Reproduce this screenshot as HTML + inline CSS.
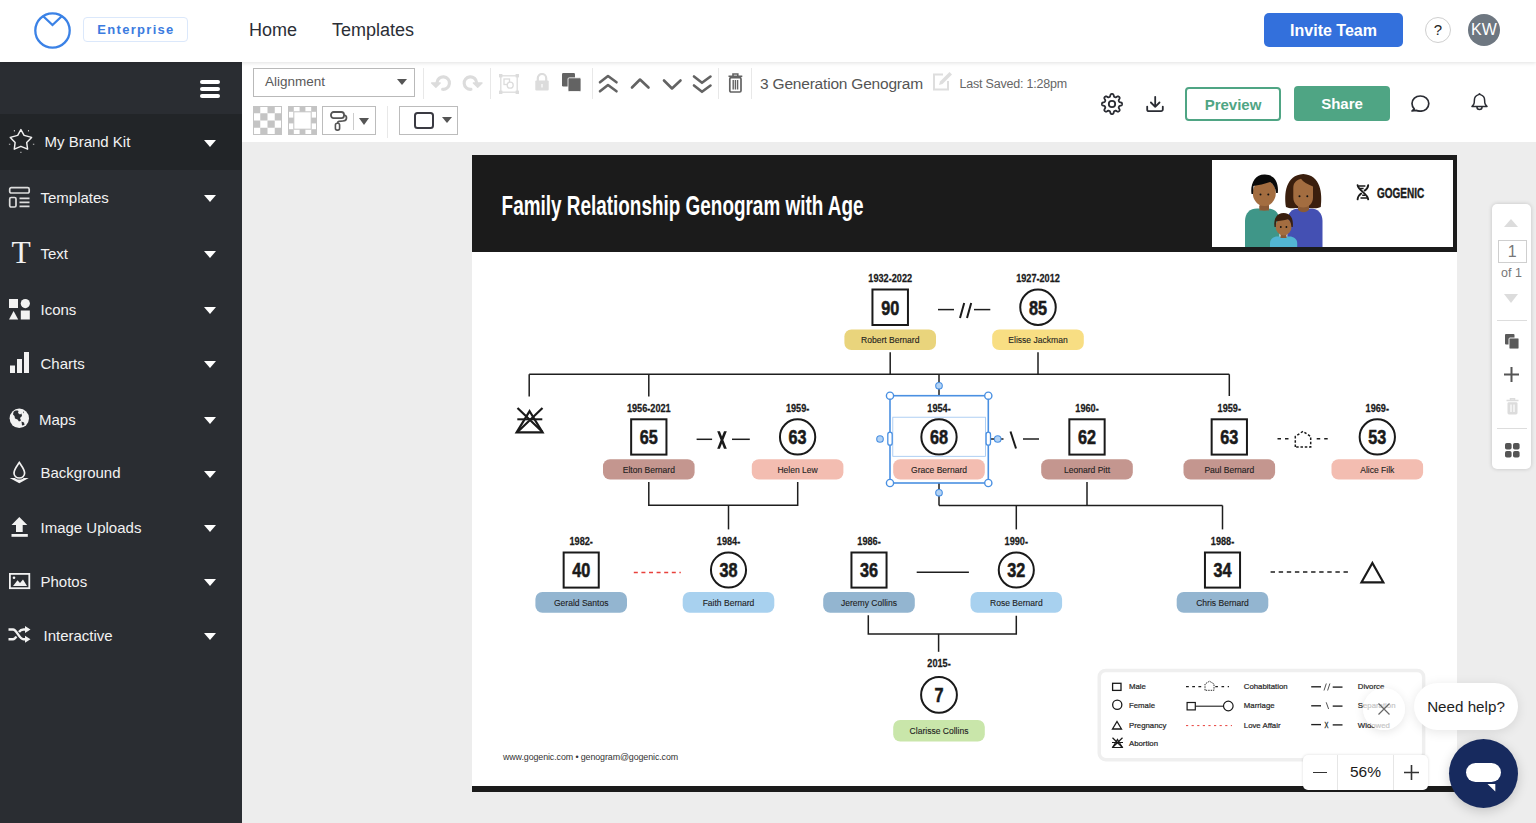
<!DOCTYPE html>
<html><head><meta charset="utf-8">
<style>
*{margin:0;padding:0;box-sizing:border-box}
html,body{width:1536px;height:823px;overflow:hidden;background:#ededed;font-family:"Liberation Sans",sans-serif}
.a{position:absolute}
#hdr{left:0;top:0;width:1536px;height:62px;background:#fff;box-shadow:0 1px 4px rgba(0,0,0,.12);z-index:5}
#side{left:0;top:62px;width:242px;height:761px;background:#2a2d32;z-index:4}
#tb{left:242px;top:62px;width:1294px;height:80px;background:#fff;z-index:3}
.nav{font-size:18px;color:#2b2e36;top:20px}
.si{left:0;width:242px;height:55px;color:#f2f2f2;font-size:15px}
.si .t{position:absolute;top:0;line-height:55px}
.si .c{position:absolute;left:204px;top:25.6px;width:0;height:0;border-left:6px solid transparent;border-right:6px solid transparent;border-top:7px solid #fff}
.si svg{position:absolute}
</style></head>
<body>
<!-- HEADER -->
<div id="hdr" class="a">
  <svg class="a" style="left:33px;top:11px" width="39" height="39" viewBox="0 0 39 39">
    <circle cx="19.5" cy="19.5" r="17.2" fill="none" stroke="#3b82e6" stroke-width="2.3"/>
    <polyline points="10.5,5.5 19.5,14 28.5,5.5" fill="none" stroke="#3b82e6" stroke-width="2.3"/>
  </svg>
  <div class="a" style="left:83px;top:17px;width:105px;height:25px;border:1px solid #dbe8fb;border-radius:4px;color:#3b7be0;font-size:13px;font-weight:bold;letter-spacing:1.3px;line-height:24px;text-align:center;padding-left:1px">Enterprise</div>
  <div class="a nav" style="left:249px">Home</div>
  <div class="a nav" style="left:332px">Templates</div>
  <div class="a" style="left:1264px;top:13px;width:139px;height:34px;background:#3370dc;border-radius:5px;color:#fff;font-weight:bold;font-size:16px;line-height:36px;text-align:center">Invite Team</div>
  <div class="a" style="left:1425px;top:17px;width:26px;height:26px;border:1px solid #cfcfcf;border-radius:50%;font-size:15px;line-height:24px;text-align:center;color:#222">?</div>
  <div class="a" style="left:1468px;top:14px;width:32px;height:32px;background:#6e7781;border-radius:50%;font-size:16px;line-height:32px;text-align:center;color:#fff">KW</div>
</div>

<!-- SIDEBAR -->
<div id="side" class="a">
  <div class="a" style="left:0;top:52px;width:242px;height:55.5px;background:#222528"></div>
<div class="a si" style="top:52.4px"><span class="t" style="left:44.5px">My Brand Kit</span><span class="c"></span></div>
<svg class="a" style="left:0;top:58px" width="40" height="40" viewBox="0 120 40 40"><path d="M20.9 129.6 L24.1 135.4 L31.6 137.4 L26.7 142.6 L27.6 149.2 L20.9 146.3 L14.3 149.2 L15.1 142.6 L10.3 137.4 L17.7 135.4 Z" fill="none" stroke="#f0f0f0" stroke-width="1.45" stroke-linejoin="round"/><path d="M14.4 130 V131.6 M28.5 130 V131.6 M8.9 144.3 H10.3 M32.9 144.3 H34.3 M20.9 151.7 V153" stroke="#bdbdbd" stroke-width="1.1"/></svg>
<div class="a si" style="top:107.8px"><span class="t" style="left:40.5px">Templates</span><span class="c"></span></div>
<svg class="a" style="left:8px;top:124.0px" width="23" height="23" viewBox="0 0 23 23"><rect x="1.7" y="1.7" width="19.5" height="5.3" rx="1.6" fill="none" stroke="#ddd" stroke-width="1.7"/><rect x="1.7" y="11.5" width="6.3" height="9.5" rx="1.4" fill="none" stroke="#ddd" stroke-width="1.7"/><path d="M11.5 12.3h10M11.5 16.3h10M11.5 20.3h10" stroke="#ddd" stroke-width="1.7"/></svg>
<div class="a si" style="top:163.6px"><span class="t" style="left:40.5px">Text</span><span class="c"></span></div>
<div class="a" style="left:11.5px;top:175px;font-family:'Liberation Serif',serif;font-size:31.5px;color:#f2f2f2;line-height:32px">T</div>
<div class="a si" style="top:219.5px"><span class="t" style="left:40.5px">Icons</span><span class="c"></span></div>
<svg class="a" style="left:9px;top:237.0px" width="22" height="21" viewBox="0 0 22 21"><rect x="0" y="0" width="9" height="9" fill="#f2f2f2"/><circle cx="16.3" cy="4.6" r="4.6" fill="#f2f2f2"/><path d="M0 20.5 L4.6 12 L9.2 20.5Z" fill="#f2f2f2"/><rect x="11.8" y="11.5" width="9" height="9" fill="#f2f2f2"/></svg>
<div class="a si" style="top:273.7px"><span class="t" style="left:40.5px">Charts</span><span class="c"></span></div>
<svg class="a" style="left:10px;top:290.0px" width="19" height="21" viewBox="0 0 19 21"><rect x="0" y="13.5" width="5" height="7.5" fill="#f2f2f2"/><rect x="7" y="7" width="5" height="14" fill="#f2f2f2"/><rect x="14" y="0" width="5" height="21" fill="#f2f2f2"/></svg>
<div class="a si" style="top:329.8px"><span class="t" style="left:39.0px">Maps</span><span class="c"></span></div>
<svg class="a" style="left:9px;top:346.0px" width="21" height="21" viewBox="0 0 21 21"><circle cx="10.3" cy="10.3" r="9.7" fill="#f2f2f2"/><path d="M4.5 4 C6 2.5 8 2.2 9.5 3 L9 5 L11 6.5 L12.5 5.5 L13 8 L11 10 L12 12.5 L10 13.5 L8.5 11.5 L6 10.5 L5.5 8 L4 6.5Z" fill="#2b2e33"/><path d="M12.5 13.5 L15 14.5 L15.5 17 L13 17.5Z" fill="#2b2e33"/><path d="M14 3 L15 4.5 L14.5 5.5Z" fill="#2b2e33"/></svg>
<div class="a si" style="top:383.3px"><span class="t" style="left:40.5px">Background</span><span class="c"></span></div>
<svg class="a" style="left:9px;top:399.0px" width="21" height="23" viewBox="0 0 21 23"><path d="M10.3 1.5 C8 5 5 8.5 5 12 C5 15 7.4 17 10.3 17 C13.2 17 15.6 15 15.6 12 C15.6 8.5 12.6 5 10.3 1.5Z" fill="none" stroke="#f2f2f2" stroke-width="1.7"/><path d="M0.7 17 L6 17 C7 18 8.5 18.6 10.3 18.6 C12.1 18.6 13.6 18 14.6 17 L19.7 17 L10.3 22.3Z" fill="#f2f2f2"/></svg>
<div class="a si" style="top:437.8px"><span class="t" style="left:40.5px">Image Uploads</span><span class="c"></span></div>
<svg class="a" style="left:11px;top:454.0px" width="18" height="22" viewBox="0 0 18 22"><path d="M8.3 1 L16.3 9 L11.7 9 L11.7 16 L5 16 L5 9 L0.5 9Z" fill="#f2f2f2"/><rect x="0.5" y="18" width="16.3" height="2.8" fill="#f2f2f2"/></svg>
<div class="a si" style="top:491.8px"><span class="t" style="left:40.5px">Photos</span><span class="c"></span></div>
<svg class="a" style="left:9px;top:511.0px" width="22" height="17" viewBox="0 0 22 17"><rect x="0.9" y="0.9" width="19.4" height="14.3" fill="none" stroke="#f2f2f2" stroke-width="1.8"/><circle cx="5" cy="4.8" r="1.3" fill="#f2f2f2"/><path d="M4 13 L8.5 7.3 L11 10 L14 6.5 L18 13Z" fill="#f2f2f2"/></svg>
<div class="a si" style="top:545.8px"><span class="t" style="left:43.5px">Interactive</span><span class="c"></span></div>
<svg class="a" style="left:8px;top:564.0px" width="23" height="17" viewBox="0 0 23 17"><path d="M0.5 3.5 H5 C9 3.5 11 13.3 15.5 13.3 H18.5" fill="none" stroke="#f2f2f2" stroke-width="2.4"/><path d="M0.5 13.3 H5 C6.5 13.3 7.5 12 8.3 10.5 M11 6 C12 4.6 13.5 3.5 15.5 3.5 H18.5" fill="none" stroke="#f2f2f2" stroke-width="2.4"/><path d="M17 0 L22.5 3.5 L17 7Z M17 9.8 L22.5 13.3 L17 16.8Z" fill="#f2f2f2"/></svg>
  <div class="a" style="left:200px;top:18px;width:20px;height:4px;background:#fff;border-radius:2px"></div>
  <div class="a" style="left:200px;top:25px;width:20px;height:4px;background:#fff;border-radius:2px"></div>
  <div class="a" style="left:200px;top:32px;width:20px;height:4px;background:#fff;border-radius:2px"></div>
</div>

<!-- TOOLBAR -->

<div id="tb" class="a">
  <!-- row1 -->
  <div class="a" style="left:11px;top:6px;width:162px;height:28.5px;border:1px solid #b9b9b9;background:#fff"></div>
  <div class="a" style="left:23px;top:12px;font-size:13.5px;color:#5a5a5a;line-height:16px">Alignment</div>
  <div class="a" style="left:154.5px;top:17px;width:0;height:0;border-left:5.5px solid transparent;border-right:5.5px solid transparent;border-top:6px solid #555"></div>
  <div class="a" style="left:181px;top:6px;width:1px;height:31px;background:#e8e8e8"></div>
  <svg class="a" style="left:186px;top:8px" width="60" height="26" viewBox="0 0 60 26"><g><path d="M14.66 19.33 A6.25 6.25 0 1 0 8.97 12.55" fill="none" stroke="#dcdcdc" stroke-width="3.1" stroke-linecap="round"/><path d="M3.6 12.9 L12.2 12.9 L7.9 17.3Z" fill="#dcdcdc" stroke="#dcdcdc" stroke-width="1.4" stroke-linejoin="round"/></g><g transform="translate(57.6,0) scale(-1,1)"><path d="M14.66 19.33 A6.25 6.25 0 1 0 8.97 12.55" fill="none" stroke="#dcdcdc" stroke-width="3.1" stroke-linecap="round"/><path d="M3.6 12.9 L12.2 12.9 L7.9 17.3Z" fill="#dcdcdc" stroke="#dcdcdc" stroke-width="1.4" stroke-linejoin="round"/></g></svg>
  <div class="a" style="left:248px;top:6px;width:1px;height:31px;background:#e8e8e8"></div>
  <svg class="a" style="left:257px;top:11.5px" width="20" height="20" viewBox="0 0 20 20"><rect x="1.8" y="1.8" width="16.4" height="16.4" fill="none" stroke="#dcdcdc" stroke-width="1.3"/><rect x="0" y="0" width="3.4" height="3.4" fill="#dcdcdc"/><rect x="16.6" y="0" width="3.4" height="3.4" fill="#dcdcdc"/><rect x="0" y="16.6" width="3.4" height="3.4" fill="#dcdcdc"/><rect x="16.6" y="16.6" width="3.4" height="3.4" fill="#dcdcdc"/><rect x="5" y="5" width="5.5" height="5.5" fill="none" stroke="#dcdcdc" stroke-width="1.3"/><circle cx="11.2" cy="11.2" r="3" fill="#fff" stroke="#dcdcdc" stroke-width="1.3"/></svg>
  <svg class="a" style="left:292.5px;top:10.5px" width="14" height="18" viewBox="0 0 14 18"><path d="M2.8 8 V5.2 A4.2 4.2 0 0 1 11.2 5.2 V8" fill="none" stroke="#dcdcdc" stroke-width="2.2"/><rect x="0.3" y="7.6" width="13.4" height="10" rx="1" fill="#dcdcdc"/><rect x="6.4" y="11" width="1.2" height="3.5" fill="#fff"/></svg>
  <svg class="a" style="left:319.5px;top:11px" width="20" height="19" viewBox="0 0 20 19"><rect x="0" y="0" width="13" height="13.5" rx="1.2" fill="#636363"/><rect x="6" y="4.8" width="13" height="13.7" rx="1.2" fill="#636363" stroke="#fff" stroke-width="0.8"/></svg>
  <div class="a" style="left:350px;top:6px;width:1px;height:31px;background:#e8e8e8"></div>
  <svg class="a" style="left:356px;top:12px" width="21" height="20" viewBox="0 0 21 20"><path d="M2 8.3 L10 2 L18.5 8.3 M2 17.3 L10 11 L18.5 17.3" fill="none" stroke="#636363" stroke-width="2.6" stroke-linecap="round" stroke-linejoin="round"/></svg>
  <svg class="a" style="left:388px;top:15px" width="21" height="13" viewBox="0 0 21 13"><path d="M2 10.5 L10 2.5 L18.5 10.5" fill="none" stroke="#636363" stroke-width="2.6" stroke-linecap="round" stroke-linejoin="round"/></svg>
  <svg class="a" style="left:419.5px;top:15.5px" width="21" height="13" viewBox="0 0 21 13"><path d="M2 2.5 L10 10.5 L18.5 2.5" fill="none" stroke="#636363" stroke-width="2.6" stroke-linecap="round" stroke-linejoin="round"/></svg>
  <svg class="a" style="left:450px;top:11.5px" width="21" height="20" viewBox="0 0 21 20"><path d="M2 2.5 L10 8.8 L18.5 2.5 M2 11.5 L10 17.8 L18.5 11.5" fill="none" stroke="#636363" stroke-width="2.6" stroke-linecap="round" stroke-linejoin="round"/></svg>
  <div class="a" style="left:475.5px;top:6px;width:1px;height:31px;background:#e8e8e8"></div>
  <svg class="a" style="left:485.5px;top:11px" width="15" height="20" viewBox="0 0 15 20"><path d="M0.5 3.3 H14.3 M5 3 V1 H9.8 V3" fill="none" stroke="#636363" stroke-width="1.6"/><rect x="1.8" y="4.6" width="11.2" height="14.4" rx="1.3" fill="none" stroke="#636363" stroke-width="1.7"/><path d="M5.2 7 V16.6 M7.4 7 V16.6 M9.6 7 V16.6" stroke="#636363" stroke-width="1.4"/></svg>
  <div class="a" style="left:508.5px;top:6px;width:1px;height:31px;background:#e8e8e8"></div>
  <div class="a" style="left:518px;top:12px;font-size:15.5px;letter-spacing:-0.2px;color:#555;line-height:20px">3 Generation Genogram</div>
  <svg class="a" style="left:689.5px;top:9px" width="21" height="21" viewBox="0 0 21 21"><path d="M11 3.5 H2 V18.5 H16 V10" fill="none" stroke="#dedede" stroke-width="2"/><path d="M7 14 L8 10.5 L17.5 1 L20 3.5 L10.5 13Z" fill="#dedede"/></svg>
  <div class="a" style="left:717.5px;top:14px;font-size:12.5px;letter-spacing:-0.2px;color:#666;line-height:16px">Last Saved: 1:28pm</div>
  <!-- row2 -->
  <svg class="a" style="left:11px;top:43.5px" width="29" height="29" viewBox="0 0 28.8 28.8"><rect x="0.00" y="0.00" width="7.20" height="7.20" fill="#c4c4c4"/><rect x="14.40" y="0.00" width="7.20" height="7.20" fill="#c4c4c4"/><rect x="7.20" y="7.20" width="7.20" height="7.20" fill="#c4c4c4"/><rect x="21.60" y="7.20" width="7.20" height="7.20" fill="#c4c4c4"/><rect x="0.00" y="14.40" width="7.20" height="7.20" fill="#c4c4c4"/><rect x="14.40" y="14.40" width="7.20" height="7.20" fill="#c4c4c4"/><rect x="7.20" y="21.60" width="7.20" height="7.20" fill="#c4c4c4"/><rect x="21.60" y="21.60" width="7.20" height="7.20" fill="#c4c4c4"/><rect x=".5" y=".5" width="27.8" height="27.8" fill="none" stroke="#c4c4c4" stroke-width="1"/></svg>
  <svg class="a" style="left:46px;top:43.5px" width="29" height="29" viewBox="0 0 28.8 28.8"><rect x="0.00" y="0.00" width="5.76" height="5.76" fill="#c4c4c4"/><rect x="11.52" y="0.00" width="5.76" height="5.76" fill="#c4c4c4"/><rect x="23.04" y="0.00" width="5.76" height="5.76" fill="#c4c4c4"/><rect x="0.00" y="11.52" width="5.76" height="5.76" fill="#c4c4c4"/><rect x="23.04" y="11.52" width="5.76" height="5.76" fill="#c4c4c4"/><rect x="0.00" y="23.04" width="5.76" height="5.76" fill="#c4c4c4"/><rect x="11.52" y="23.04" width="5.76" height="5.76" fill="#c4c4c4"/><rect x="23.04" y="23.04" width="5.76" height="5.76" fill="#c4c4c4"/><rect x=".5" y=".5" width="27.8" height="27.8" fill="none" stroke="#c4c4c4" stroke-width="1"/><rect x="5.76" y="5.76" width="17.28" height="17.28" fill="none" stroke="#c4c4c4" stroke-width="1"/></svg>
  <div class="a" style="left:80px;top:43.5px;width:54px;height:29px;border:1px solid #bcbcbc;background:#fff"></div>
  <svg class="a" style="left:88px;top:49px" width="19" height="20" viewBox="0 0 19 20"><rect x="1" y="1" width="13" height="6.2" rx="2.6" fill="none" stroke="#555" stroke-width="1.8"/><path d="M14 4 C17.5 4.5 17.5 9.8 13 10 L9 10.3 C7.5 10.4 7.6 11.2 7.6 12.5" fill="none" stroke="#555" stroke-width="1.7"/><rect x="5.4" y="12.3" width="4.2" height="6.8" rx="1.8" fill="none" stroke="#555" stroke-width="1.6"/></svg>
  <div class="a" style="left:110.5px;top:50.5px;width:1px;height:17px;background:#ccc"></div>
  <div class="a" style="left:117px;top:56px;width:0;height:0;border-left:5px solid transparent;border-right:5px solid transparent;border-top:7px solid #555"></div>
  <div class="a" style="left:145px;top:43.5px;width:1px;height:32px;background:#e8e8e8"></div>
  <div class="a" style="left:157px;top:43.5px;width:59px;height:29px;border:1px solid #bcbcbc;background:#fff"></div>
  <div class="a" style="left:171.5px;top:50px;width:20.5px;height:16.5px;border:2px solid #3a3a42;border-radius:3.5px"></div>
  <div class="a" style="left:200px;top:55px;width:0;height:0;border-left:5px solid transparent;border-right:5px solid transparent;border-top:6px solid #555"></div>
  <!-- right -->
  <svg class="a" style="left:859px;top:31px" width="22" height="22" viewBox="0 0 22 22"><path d="M11.00 0.95 L11.39 0.97 L11.78 1.05 L12.16 1.24 L12.48 1.67 L12.71 2.42 L12.88 3.17 L13.08 3.62 L13.32 3.85 L13.58 4.00 L13.85 4.12 L14.12 4.22 L14.41 4.30 L14.75 4.31 L15.21 4.13 L15.86 3.72 L16.55 3.36 L17.08 3.28 L17.48 3.41 L17.81 3.63 L18.11 3.89 L18.37 4.19 L18.59 4.52 L18.72 4.92 L18.64 5.45 L18.28 6.14 L17.87 6.79 L17.69 7.25 L17.70 7.59 L17.78 7.88 L17.88 8.15 L18.00 8.42 L18.15 8.68 L18.38 8.92 L18.83 9.12 L19.58 9.29 L20.33 9.52 L20.76 9.84 L20.95 10.22 L21.03 10.61 L21.05 11.00 L21.03 11.39 L20.95 11.78 L20.76 12.16 L20.33 12.48 L19.58 12.71 L18.83 12.88 L18.38 13.08 L18.15 13.32 L18.00 13.58 L17.88 13.85 L17.78 14.12 L17.70 14.41 L17.69 14.75 L17.87 15.21 L18.28 15.86 L18.64 16.55 L18.72 17.08 L18.59 17.48 L18.37 17.81 L18.11 18.11 L17.81 18.37 L17.48 18.59 L17.08 18.72 L16.55 18.64 L15.86 18.28 L15.21 17.87 L14.75 17.69 L14.41 17.70 L14.12 17.78 L13.85 17.88 L13.58 18.00 L13.32 18.15 L13.08 18.38 L12.88 18.83 L12.71 19.58 L12.48 20.33 L12.16 20.76 L11.78 20.95 L11.39 21.03 L11.00 21.05 L10.61 21.03 L10.22 20.95 L9.84 20.76 L9.52 20.33 L9.29 19.58 L9.12 18.83 L8.92 18.38 L8.68 18.15 L8.42 18.00 L8.15 17.88 L7.88 17.78 L7.59 17.70 L7.25 17.69 L6.79 17.87 L6.14 18.28 L5.45 18.64 L4.92 18.72 L4.52 18.59 L4.19 18.37 L3.89 18.11 L3.63 17.81 L3.41 17.48 L3.28 17.08 L3.36 16.55 L3.72 15.86 L4.13 15.21 L4.31 14.75 L4.30 14.41 L4.22 14.12 L4.12 13.85 L4.00 13.58 L3.85 13.32 L3.62 13.08 L3.17 12.88 L2.42 12.71 L1.67 12.48 L1.24 12.16 L1.05 11.78 L0.97 11.39 L0.95 11.00 L0.97 10.61 L1.05 10.22 L1.24 9.84 L1.67 9.52 L2.42 9.29 L3.17 9.12 L3.62 8.92 L3.85 8.68 L4.00 8.42 L4.12 8.15 L4.22 7.88 L4.30 7.59 L4.31 7.25 L4.13 6.79 L3.72 6.14 L3.36 5.45 L3.28 4.92 L3.41 4.52 L3.63 4.19 L3.89 3.89 L4.19 3.63 L4.52 3.41 L4.92 3.28 L5.45 3.36 L6.14 3.72 L6.79 4.13 L7.25 4.31 L7.59 4.30 L7.88 4.22 L8.15 4.12 L8.42 4.00 L8.68 3.85 L8.92 3.62 L9.12 3.17 L9.29 2.42 L9.52 1.67 L9.84 1.24 L10.22 1.05 L10.61 0.97Z" fill="none" stroke="#2a2c33" stroke-width="1.8" stroke-linejoin="round"/><circle cx="11" cy="11" r="3.2" fill="none" stroke="#2a2c33" stroke-width="1.8"/></svg>
  <svg class="a" style="left:904px;top:33px" width="18" height="18" viewBox="0 0 18 18"><path d="M9.2 1.8 V11.8 M4.9 7.5 L9.2 11.8 L13.5 7.5" fill="none" stroke="#2a2c33" stroke-width="1.8" stroke-linecap="round" stroke-linejoin="round"/><path d="M1.2 11.6 V14.4 A1.8 1.8 0 0 0 3 16.2 H15 A1.8 1.8 0 0 0 16.8 14.4 V11.6" fill="none" stroke="#2a2c33" stroke-width="1.8" stroke-linecap="round"/></svg>
  <div class="a" style="left:943px;top:24.5px;width:96px;height:34px;border:2px solid #4fa584;border-radius:4px;color:#4fa584;font-weight:bold;font-size:15px;line-height:31px;text-align:center">Preview</div>
  <div class="a" style="left:1052px;top:24px;width:96px;height:34.5px;background:#4fa584;border-radius:4px;color:#fff;font-weight:bold;font-size:15px;line-height:35px;text-align:center">Share</div>
  <svg class="a" style="left:1169px;top:33px" width="19" height="17" viewBox="0 0 19 17"><path d="M3.2 13.8 L1 16 L5 15.4 C6.2 15.9 7.6 16.2 9.3 16.2 C14 16.2 17.8 12.9 17.8 8.6 C17.8 4.3 14 1 9.3 1 C4.6 1 1 4.3 1 8.6 C1 10.6 1.8 12.4 3.2 13.8Z" fill="none" stroke="#2a2c33" stroke-width="1.7" stroke-linejoin="round"/></svg>
  <svg class="a" style="left:1229px;top:31px" width="17" height="19" viewBox="0 0 17 19"><path d="M1 13.5 H16 L14.4 11.5 C13.6 10.3 13.6 9 13.6 7 C13.6 4.3 11.5 2.3 9.4 1.6 L8.5 0.8 L7.6 1.6 C5.5 2.3 3.4 4.3 3.4 7 C3.4 9 3.4 10.3 2.6 11.5Z" fill="none" stroke="#2a2c33" stroke-width="1.5" stroke-linejoin="round"/><path d="M5.9 13.8 A2.6 2.8 0 0 0 11.1 13.8" fill="none" stroke="#2a2c33" stroke-width="1.5"/></svg>
</div>

<!-- CANVAS -->
<div id="cv" class="a" style="left:472px;top:155px;width:985px;height:637px;background:#fff;z-index:1">
  <div class="a" style="left:0;top:0;width:985px;height:97px;background:#1b1b1b"></div>
  <div class="a" style="left:0;top:631px;width:985px;height:6px;background:#1b1b1b"></div>
  <svg class="a" style="left:0;top:0" width="985" height="97" viewBox="0 0 985 97"><text x="29.6" y="60.3" textLength="362" lengthAdjust="spacingAndGlyphs" font-family="Liberation Sans" font-weight="bold" font-size="28.4" fill="#fff">Family Relationship Genogram with Age</text></svg>
  <div class="a" style="left:740px;top:5px;width:241px;height:87px;background:#fff"></div>
  <svg class="a" style="left:740px;top:5px" width="241" height="87" viewBox="1212 160 241 87">
    <!-- man -->
    <path d="M1245 247 V221 C1245 213 1250 208.5 1257 208.5 H1268 C1275 208.5 1279.5 213 1279.5 221 V247 Z" fill="#3f9688"/>
    <rect x="1259.5" y="202" width="9.5" height="8.5" fill="#93603a"/>
    <path d="M1259.5 208.5 C1261 211 1267.5 211 1269 208.5 V206 H1259.5Z" fill="#8a5a36"/>
    <ellipse cx="1264.3" cy="193" rx="11.5" ry="13" fill="#a36d40"/>
    <path d="M1251.5 194 C1250 184 1255 174 1265 174.5 C1274 174.5 1279 182 1277.8 193 L1276.2 193 C1275.5 188 1273.5 184 1270 182 C1265 184 1258 185 1253.5 186 L1253 194Z" fill="#0a0a0a"/>
    <circle cx="1260.5" cy="194.5" r="1" fill="#111"/><circle cx="1268.3" cy="194.5" r="1" fill="#111"/>
    <!-- woman -->
    <path d="M1287.3 247 V221 C1287.3 213 1292 208.5 1299 208.5 H1310.5 C1317.5 208.5 1322.5 213 1322.5 221 V247 Z" fill="#4450b3"/>
    <path d="M1286 207 C1284 194 1285.5 175 1303.3 174 C1321 175 1322.5 194 1320.8 207 C1318 208.5 1314 208.5 1310 208 L1296 208 C1292 208.5 1289 208.5 1286 207Z" fill="#3a1f0e"/>
    <path d="M1298 204 V209.5 C1300 213 1307 213 1309 209.5 V204Z" fill="#8a5a36"/>
    <path d="M1293.3 188 C1293.3 182 1297.5 179.8 1301 178.8 C1303 182 1307.5 184.5 1313 186.5 V197.5 C1313 203.5 1308.8 207.5 1303.2 207.5 C1297.6 207.5 1293.3 203.5 1293.3 197.5Z" fill="#a36d40"/>
    <circle cx="1299.5" cy="196.3" r="1" fill="#111"/><circle cx="1307.3" cy="196.3" r="1" fill="#111"/>
    <!-- child -->
    <path d="M1270 247.5 V243 C1270 239 1273.5 236.5 1277.5 236.5 H1289.5 C1293.5 236.5 1297.2 239 1297.2 243 V247.5Z" fill="#52b5d3"/>
    <rect x="1280.5" y="233" width="6" height="5" fill="#8a5a36"/>
    <ellipse cx="1283.6" cy="226.5" rx="8" ry="9" fill="#a36d40"/>
    <path d="M1274.5 227 C1273.5 218 1277 213 1283.6 213 C1290.3 213 1293.7 218 1292.8 227 L1291.5 227 C1291 222.5 1290 220.5 1288 219.3 C1284 220.5 1279.5 221 1276 221.5 L1275.8 227Z" fill="#3a1f0e"/>
    <circle cx="1280.8" cy="227" r=".9" fill="#111"/><circle cx="1286.4" cy="227" r=".9" fill="#111"/>
    <!-- logo -->
    <g fill="none" stroke="#1a1a1a" stroke-width="1.9" stroke-linecap="round"><path d="M1357.6 185.2 C1358.5 191 1367.5 193 1368.2 199.4"/><path d="M1368.2 185.2 C1368 187.5 1366.5 189.5 1364.6 190.6 M1361.2 193.5 C1359 195 1357.8 197 1357.6 199.4"/></g><g stroke="#1a1a1a" stroke-width="1.5"><path d="M1358.5 185.9 H1365.4 M1360 188.4 H1363.6 M1362.2 195.3 H1365.4 M1360.5 198.1 H1367"/></g>
    <text x="1377" y="198.2" textLength="47.3" lengthAdjust="spacingAndGlyphs" font-family="Liberation Sans" font-weight="bold" font-size="15.3" fill="#1a1a1a" stroke="#1a1a1a" stroke-width="0.4">GOGENIC</text>
  </svg>
  <div class="a" style="left:31px;top:596px;font-size:8.9px;color:#333;line-height:12px;letter-spacing:-0.1px">www.gogenic.com &bull; genogram@gogenic.com</div>
</div>
<!--GENO--><svg class="a" style="left:0;top:0;z-index:2" width="1536" height="823" viewBox="0 0 1536 823"><line x1="529.2" y1="374.3" x2="1229.3" y2="374.3" stroke="#1e1e1e" stroke-width="1.5"/><line x1="529.2" y1="374.3" x2="529.2" y2="396.6" stroke="#1e1e1e" stroke-width="1.5"/><line x1="648.8" y1="374.3" x2="648.8" y2="396.6" stroke="#1e1e1e" stroke-width="1.5"/><line x1="890.2" y1="352.3" x2="890.2" y2="374.3" stroke="#1e1e1e" stroke-width="1.5"/><line x1="939" y1="374.3" x2="939" y2="395.7" stroke="#1e1e1e" stroke-width="1.5"/><line x1="1038" y1="352.3" x2="1038" y2="374.3" stroke="#1e1e1e" stroke-width="1.5"/><line x1="1229.3" y1="374.3" x2="1229.3" y2="396" stroke="#1e1e1e" stroke-width="1.5"/><polyline points="648.8,482 648.8,505.3 797.7,505.3 797.7,482" fill="none" stroke="#1e1e1e" stroke-width="1.5"/><line x1="728.5" y1="505.3" x2="728.5" y2="529.4" stroke="#1e1e1e" stroke-width="1.5"/><line x1="939" y1="483" x2="939" y2="505.5" stroke="#1e1e1e" stroke-width="1.5"/><line x1="1087" y1="482" x2="1087" y2="505.5" stroke="#1e1e1e" stroke-width="1.5"/><line x1="939" y1="505.5" x2="1222.5" y2="505.5" stroke="#1e1e1e" stroke-width="1.5"/><line x1="1016.3" y1="505.5" x2="1016.3" y2="529.4" stroke="#1e1e1e" stroke-width="1.5"/><line x1="1222.5" y1="505.5" x2="1222.5" y2="529.4" stroke="#1e1e1e" stroke-width="1.5"/><polyline points="868.3,615.2 868.3,633.9 1016.3,633.9 1016.3,615.7" fill="none" stroke="#1e1e1e" stroke-width="1.5"/><line x1="938.6" y1="633.9" x2="938.6" y2="651.8" stroke="#1e1e1e" stroke-width="1.5"/><text transform="translate(890.2,281.6) scale(0.84,1)" text-anchor="middle" font-family="Liberation Sans" font-weight="bold" font-size="10.9" fill="#1a1a1a" stroke="#1a1a1a" stroke-width="0.25">1932-2022</text><rect x="872.45" y="289.50" width="35.50" height="35.50" fill="#fff" stroke="#1a1a1a" stroke-width="2.0"/><text transform="translate(890.2,314.65) scale(0.82,1)" text-anchor="middle" font-family="Liberation Sans" font-weight="bold" font-size="19.8" fill="#1a1a1a" stroke="#1a1a1a" stroke-width="0.55">90</text><rect x="844.40" y="329.4" width="91.6" height="20.60" rx="7" fill="#e9d47c"/><text transform="translate(890.2,343.30) scale(0.89,1)" text-anchor="middle" font-family="Liberation Sans" font-size="9.6" fill="#1e1e1e" stroke="#1e1e1e" stroke-width="0.12">Robert Bernard</text><text transform="translate(1038,281.6) scale(0.84,1)" text-anchor="middle" font-family="Liberation Sans" font-weight="bold" font-size="10.9" fill="#1a1a1a" stroke="#1a1a1a" stroke-width="0.25">1927-2012</text><circle cx="1038" cy="307.25" r="17.75" fill="#fff" stroke="#1a1a1a" stroke-width="2.0"/><text transform="translate(1038,314.65) scale(0.82,1)" text-anchor="middle" font-family="Liberation Sans" font-weight="bold" font-size="19.8" fill="#1a1a1a" stroke="#1a1a1a" stroke-width="0.55">85</text><rect x="992.20" y="329.4" width="91.6" height="20.60" rx="7" fill="#f8de83"/><text transform="translate(1038,343.30) scale(0.89,1)" text-anchor="middle" font-family="Liberation Sans" font-size="9.6" fill="#1e1e1e" stroke="#1e1e1e" stroke-width="0.12">Elisse Jackman</text><text transform="translate(648.8,411.6) scale(0.84,1)" text-anchor="middle" font-family="Liberation Sans" font-weight="bold" font-size="10.9" fill="#1a1a1a" stroke="#1a1a1a" stroke-width="0.25">1956-2021</text><rect x="631.15" y="419.30" width="35.30" height="35.30" fill="#fff" stroke="#1a1a1a" stroke-width="2.0"/><text transform="translate(648.8,444.35) scale(0.82,1)" text-anchor="middle" font-family="Liberation Sans" font-weight="bold" font-size="19.8" fill="#1a1a1a" stroke="#1a1a1a" stroke-width="0.55">65</text><rect x="603.00" y="459.2" width="91.6" height="20.40" rx="7" fill="#c4968f"/><text transform="translate(648.8,473.00) scale(0.89,1)" text-anchor="middle" font-family="Liberation Sans" font-size="9.6" fill="#1e1e1e" stroke="#1e1e1e" stroke-width="0.12">Elton Bernard</text><text transform="translate(797.6,411.6) scale(0.84,1)" text-anchor="middle" font-family="Liberation Sans" font-weight="bold" font-size="10.9" fill="#1a1a1a" stroke="#1a1a1a" stroke-width="0.25">1959-</text><circle cx="797.6" cy="436.95" r="17.65" fill="#fff" stroke="#1a1a1a" stroke-width="2.0"/><text transform="translate(797.6,444.35) scale(0.82,1)" text-anchor="middle" font-family="Liberation Sans" font-weight="bold" font-size="19.8" fill="#1a1a1a" stroke="#1a1a1a" stroke-width="0.55">63</text><rect x="751.80" y="459.2" width="91.6" height="20.40" rx="7" fill="#f3bdb1"/><text transform="translate(797.6,473.00) scale(0.89,1)" text-anchor="middle" font-family="Liberation Sans" font-size="9.6" fill="#1e1e1e" stroke="#1e1e1e" stroke-width="0.12">Helen Lew</text><text transform="translate(939,411.6) scale(0.84,1)" text-anchor="middle" font-family="Liberation Sans" font-weight="bold" font-size="10.9" fill="#1a1a1a" stroke="#1a1a1a" stroke-width="0.25">1954-</text><circle cx="939" cy="436.95" r="17.65" fill="#fff" stroke="#1a1a1a" stroke-width="2.0"/><text transform="translate(939,444.35) scale(0.82,1)" text-anchor="middle" font-family="Liberation Sans" font-weight="bold" font-size="19.8" fill="#1a1a1a" stroke="#1a1a1a" stroke-width="0.55">68</text><rect x="893.20" y="459.2" width="91.6" height="20.40" rx="7" fill="#f3bdb1"/><text transform="translate(939,473.00) scale(0.89,1)" text-anchor="middle" font-family="Liberation Sans" font-size="9.6" fill="#1e1e1e" stroke="#1e1e1e" stroke-width="0.12">Grace Bernard</text><text transform="translate(1087,411.6) scale(0.84,1)" text-anchor="middle" font-family="Liberation Sans" font-weight="bold" font-size="10.9" fill="#1a1a1a" stroke="#1a1a1a" stroke-width="0.25">1960-</text><rect x="1069.35" y="419.30" width="35.30" height="35.30" fill="#fff" stroke="#1a1a1a" stroke-width="2.0"/><text transform="translate(1087,444.35) scale(0.82,1)" text-anchor="middle" font-family="Liberation Sans" font-weight="bold" font-size="19.8" fill="#1a1a1a" stroke="#1a1a1a" stroke-width="0.55">62</text><rect x="1041.20" y="459.2" width="91.6" height="20.40" rx="7" fill="#c4968f"/><text transform="translate(1087,473.00) scale(0.89,1)" text-anchor="middle" font-family="Liberation Sans" font-size="9.6" fill="#1e1e1e" stroke="#1e1e1e" stroke-width="0.12">Leonard Pitt</text><text transform="translate(1229.3,411.6) scale(0.84,1)" text-anchor="middle" font-family="Liberation Sans" font-weight="bold" font-size="10.9" fill="#1a1a1a" stroke="#1a1a1a" stroke-width="0.25">1959-</text><rect x="1211.65" y="419.30" width="35.30" height="35.30" fill="#fff" stroke="#1a1a1a" stroke-width="2.0"/><text transform="translate(1229.3,444.35) scale(0.82,1)" text-anchor="middle" font-family="Liberation Sans" font-weight="bold" font-size="19.8" fill="#1a1a1a" stroke="#1a1a1a" stroke-width="0.55">63</text><rect x="1183.50" y="459.2" width="91.6" height="20.40" rx="7" fill="#c4968f"/><text transform="translate(1229.3,473.00) scale(0.89,1)" text-anchor="middle" font-family="Liberation Sans" font-size="9.6" fill="#1e1e1e" stroke="#1e1e1e" stroke-width="0.12">Paul Bernard</text><text transform="translate(1377.3,411.6) scale(0.84,1)" text-anchor="middle" font-family="Liberation Sans" font-weight="bold" font-size="10.9" fill="#1a1a1a" stroke="#1a1a1a" stroke-width="0.25">1969-</text><circle cx="1377.3" cy="436.95" r="17.65" fill="#fff" stroke="#1a1a1a" stroke-width="2.0"/><text transform="translate(1377.3,444.35) scale(0.82,1)" text-anchor="middle" font-family="Liberation Sans" font-weight="bold" font-size="19.8" fill="#1a1a1a" stroke="#1a1a1a" stroke-width="0.55">53</text><rect x="1331.50" y="459.2" width="91.6" height="20.40" rx="7" fill="#f3bdb1"/><text transform="translate(1377.3,473.00) scale(0.89,1)" text-anchor="middle" font-family="Liberation Sans" font-size="9.6" fill="#1e1e1e" stroke="#1e1e1e" stroke-width="0.12">Alice Filk</text><text transform="translate(581.2,544.6) scale(0.84,1)" text-anchor="middle" font-family="Liberation Sans" font-weight="bold" font-size="10.9" fill="#1a1a1a" stroke="#1a1a1a" stroke-width="0.25">1982-</text><rect x="563.65" y="552.50" width="35.10" height="35.10" fill="#fff" stroke="#1a1a1a" stroke-width="2.0"/><text transform="translate(581.2,577.45) scale(0.82,1)" text-anchor="middle" font-family="Liberation Sans" font-weight="bold" font-size="19.8" fill="#1a1a1a" stroke="#1a1a1a" stroke-width="0.55">40</text><rect x="535.40" y="592.0" width="91.6" height="20.80" rx="7" fill="#93b5d0"/><text transform="translate(581.2,606.00) scale(0.89,1)" text-anchor="middle" font-family="Liberation Sans" font-size="9.6" fill="#1e1e1e" stroke="#1e1e1e" stroke-width="0.12">Gerald Santos</text><text transform="translate(728.5,544.6) scale(0.84,1)" text-anchor="middle" font-family="Liberation Sans" font-weight="bold" font-size="10.9" fill="#1a1a1a" stroke="#1a1a1a" stroke-width="0.25">1984-</text><circle cx="728.5" cy="570.05" r="17.55" fill="#fff" stroke="#1a1a1a" stroke-width="2.0"/><text transform="translate(728.5,577.45) scale(0.82,1)" text-anchor="middle" font-family="Liberation Sans" font-weight="bold" font-size="19.8" fill="#1a1a1a" stroke="#1a1a1a" stroke-width="0.55">38</text><rect x="682.70" y="592.0" width="91.6" height="20.80" rx="7" fill="#a8d1ef"/><text transform="translate(728.5,606.00) scale(0.89,1)" text-anchor="middle" font-family="Liberation Sans" font-size="9.6" fill="#1e1e1e" stroke="#1e1e1e" stroke-width="0.12">Faith Bernard</text><text transform="translate(869,544.6) scale(0.84,1)" text-anchor="middle" font-family="Liberation Sans" font-weight="bold" font-size="10.9" fill="#1a1a1a" stroke="#1a1a1a" stroke-width="0.25">1986-</text><rect x="851.45" y="552.50" width="35.10" height="35.10" fill="#fff" stroke="#1a1a1a" stroke-width="2.0"/><text transform="translate(869,577.45) scale(0.82,1)" text-anchor="middle" font-family="Liberation Sans" font-weight="bold" font-size="19.8" fill="#1a1a1a" stroke="#1a1a1a" stroke-width="0.55">36</text><rect x="823.20" y="592.0" width="91.6" height="20.80" rx="7" fill="#93b5d0"/><text transform="translate(869,606.00) scale(0.89,1)" text-anchor="middle" font-family="Liberation Sans" font-size="9.6" fill="#1e1e1e" stroke="#1e1e1e" stroke-width="0.12">Jeremy Collins</text><text transform="translate(1016.3,544.6) scale(0.84,1)" text-anchor="middle" font-family="Liberation Sans" font-weight="bold" font-size="10.9" fill="#1a1a1a" stroke="#1a1a1a" stroke-width="0.25">1990-</text><circle cx="1016.3" cy="570.05" r="17.55" fill="#fff" stroke="#1a1a1a" stroke-width="2.0"/><text transform="translate(1016.3,577.45) scale(0.82,1)" text-anchor="middle" font-family="Liberation Sans" font-weight="bold" font-size="19.8" fill="#1a1a1a" stroke="#1a1a1a" stroke-width="0.55">32</text><rect x="970.50" y="592.0" width="91.6" height="20.80" rx="7" fill="#a8d1ef"/><text transform="translate(1016.3,606.00) scale(0.89,1)" text-anchor="middle" font-family="Liberation Sans" font-size="9.6" fill="#1e1e1e" stroke="#1e1e1e" stroke-width="0.12">Rose Bernard</text><text transform="translate(1222.5,544.6) scale(0.84,1)" text-anchor="middle" font-family="Liberation Sans" font-weight="bold" font-size="10.9" fill="#1a1a1a" stroke="#1a1a1a" stroke-width="0.25">1988-</text><rect x="1204.95" y="552.50" width="35.10" height="35.10" fill="#fff" stroke="#1a1a1a" stroke-width="2.0"/><text transform="translate(1222.5,577.45) scale(0.82,1)" text-anchor="middle" font-family="Liberation Sans" font-weight="bold" font-size="19.8" fill="#1a1a1a" stroke="#1a1a1a" stroke-width="0.55">34</text><rect x="1176.70" y="592.0" width="91.6" height="20.80" rx="7" fill="#93b5d0"/><text transform="translate(1222.5,606.00) scale(0.89,1)" text-anchor="middle" font-family="Liberation Sans" font-size="9.6" fill="#1e1e1e" stroke="#1e1e1e" stroke-width="0.12">Chris Bernard</text><text transform="translate(939,666.7) scale(0.84,1)" text-anchor="middle" font-family="Liberation Sans" font-weight="bold" font-size="10.9" fill="#1a1a1a" stroke="#1a1a1a" stroke-width="0.25">2015-</text><circle cx="939" cy="694.90" r="17.90" fill="#fff" stroke="#1a1a1a" stroke-width="2.0"/><text transform="translate(939,702.30) scale(0.82,1)" text-anchor="middle" font-family="Liberation Sans" font-weight="bold" font-size="19.8" fill="#1a1a1a" stroke="#1a1a1a" stroke-width="0.55">7</text><rect x="893.20" y="720.0" width="91.6" height="21.60" rx="7" fill="#c9e6aa"/><text transform="translate(939,734.40) scale(0.89,1)" text-anchor="middle" font-family="Liberation Sans" font-size="9.6" fill="#1e1e1e" stroke="#1e1e1e" stroke-width="0.12">Clarisse Collins</text><line x1="938" y1="309.6" x2="954" y2="309.6" stroke="#1e1e1e" stroke-width="1.5"/><line x1="974" y1="309.6" x2="990.3" y2="309.6" stroke="#1e1e1e" stroke-width="1.5"/><path d="M960 318 L964.2 303 M967 318 L971.2 303" stroke="#1a1a1a" stroke-width="2"/><line x1="696.6" y1="439.3" x2="712.1" y2="439.3" stroke="#1e1e1e" stroke-width="1.5"/><line x1="732" y1="439.3" x2="749.8" y2="439.3" stroke="#1e1e1e" stroke-width="1.5"/><path d="M717.2 431.3 H719.9 L726.8 448.8 H724Z M724 431.3 H726.8 L719.9 448.8 H717.2Z" fill="#1a1a1a"/><line x1="990.8" y1="439" x2="1003.5" y2="439" stroke="#1e1e1e" stroke-width="1.5"/><path d="M1010.5 431.5 L1016 448.5" stroke="#1a1a1a" stroke-width="2"/><line x1="1023" y1="439" x2="1039" y2="439" stroke="#1e1e1e" stroke-width="1.5"/><line x1="1277.5" y1="438.8" x2="1289" y2="438.8" stroke="#1e1e1e" stroke-width="1.5" stroke-dasharray="3.5 4"/><line x1="1316.7" y1="438.8" x2="1329" y2="438.8" stroke="#1e1e1e" stroke-width="1.5" stroke-dasharray="3.5 4"/><path d="M1295.3 447 V436.5 L1303 431.3 L1310.7 436.5 V447 Z" fill="none" stroke="#1a1a1a" stroke-width="1.5" stroke-dasharray="2.5 1.8"/><line x1="633.8" y1="572.5" x2="680.8" y2="572.5" stroke="#e8413c" stroke-width="1.4" stroke-dasharray="4 3.6"/><line x1="916.7" y1="572.3" x2="968.9" y2="572.3" stroke="#1e1e1e" stroke-width="1.5"/><line x1="1270.6" y1="571.9" x2="1351.4" y2="571.9" stroke="#1e1e1e" stroke-width="1.5" stroke-dasharray="4.4 3.7"/><path d="M1372.4 563 L1383.3 582.3 H1361.5 Z" fill="none" stroke="#1a1a1a" stroke-width="2.2" stroke-linejoin="miter"/><g stroke="#1a1a1a" stroke-width="2.2" fill="none"><path d="M529.6 411.2 L542.6 432.4 H516.6 Z"/><path d="M517.5 408 L542.5 432 M542.5 408 L517.5 432"/><path d="M517.3 419.3 H542.3" stroke-width="2"/></g><rect x="892.8" y="417.2" width="92.6" height="39.1" fill="none" stroke="#9cc3f0" stroke-width="0.8"/><rect x="890" y="395.7" width="98.3" height="87.3" fill="none" stroke="#4a90e2" stroke-width="1.6"/><circle cx="890" cy="395.7" r="3.6" fill="#fff" stroke="#4a90e2" stroke-width="1.4"/><circle cx="988.3" cy="395.7" r="3.6" fill="#fff" stroke="#4a90e2" stroke-width="1.4"/><circle cx="890" cy="483" r="3.6" fill="#fff" stroke="#4a90e2" stroke-width="1.4"/><circle cx="988.3" cy="483" r="3.6" fill="#fff" stroke="#4a90e2" stroke-width="1.4"/><rect x="887.8" y="432.2" width="4.4" height="13" rx="2.2" fill="#fff" stroke="#4a90e2" stroke-width="1.3"/><rect x="986.0999999999999" y="432.2" width="4.4" height="13" rx="2.2" fill="#fff" stroke="#4a90e2" stroke-width="1.3"/><circle cx="939" cy="385.8" r="3.3" fill="#b3d3f5" stroke="#4a90e2" stroke-width="1.1"/><circle cx="939" cy="492.8" r="3.3" fill="#b3d3f5" stroke="#4a90e2" stroke-width="1.1"/><circle cx="880" cy="439" r="3.3" fill="#b3d3f5" stroke="#4a90e2" stroke-width="1.1"/><circle cx="997.7" cy="439" r="3.3" fill="#b3d3f5" stroke="#4a90e2" stroke-width="1.1"/><rect x="1099.25" y="670.45" width="324.4" height="89.3" rx="6.5" fill="#fff" stroke="#efefef" stroke-width="3.5"/><rect x="1112.6" y="683.3" width="8.4" height="7.1" fill="none" stroke="#1a1a1a" stroke-width="1.3"/><circle cx="1117.25" cy="704.8" r="4.6" fill="none" stroke="#1a1a1a" stroke-width="1.3"/><path d="M1117 721.5 L1121.5 729 H1112.5Z" fill="none" stroke="#1a1a1a" stroke-width="1.3"/><g stroke="#1a1a1a" stroke-width="1.2" fill="none"><path d="M1117.5 739.5 L1122.3 747.5 H1112.7Z"/><path d="M1112.5 737.8 L1122.5 747.5 M1122.5 737.8 L1112.5 747.5 M1112 742.5 H1123"/></g><text x="1129" y="688.5" font-family="Liberation Sans" font-size="7.8" fill="#2a2a2a" stroke="#2a2a2a" stroke-width="0.22">Male</text><text x="1129" y="708.3" font-family="Liberation Sans" font-size="7.8" fill="#2a2a2a" stroke="#2a2a2a" stroke-width="0.22">Female</text><text x="1129" y="727.6" font-family="Liberation Sans" font-size="7.8" fill="#2a2a2a" stroke="#2a2a2a" stroke-width="0.22">Pregnancy</text><text x="1129" y="746" font-family="Liberation Sans" font-size="7.8" fill="#2a2a2a" stroke="#2a2a2a" stroke-width="0.22">Abortion</text><line x1="1186" y1="686.6" x2="1204" y2="686.6" stroke="#1e1e1e" stroke-width="1.1" stroke-dasharray="2.8 3.4"/><line x1="1215.3" y1="686.6" x2="1229" y2="686.6" stroke="#1e1e1e" stroke-width="1.1" stroke-dasharray="2.6 3.6"/><path d="M1205 690.3 V684 L1209.5 681.2 L1214 684 V690.3Z" fill="none" stroke="#1a1a1a" stroke-width="0.9" stroke-dasharray="1.5 1"/><rect x="1187.1" y="702.5" width="8.2" height="7.4" fill="none" stroke="#1a1a1a" stroke-width="1.2"/><line x1="1195.3" y1="706.2" x2="1223" y2="706.2" stroke="#1e1e1e" stroke-width="1.1"/><circle cx="1228.3" cy="706" r="4.8" fill="none" stroke="#1a1a1a" stroke-width="1.2"/><line x1="1186" y1="725.6" x2="1232" y2="725.6" stroke="#e8413c" stroke-width="1" stroke-dasharray="2.2 3.4"/><text x="1243.8" y="688.5" font-family="Liberation Sans" font-size="7.8" fill="#2a2a2a" stroke="#2a2a2a" stroke-width="0.22">Cohabitation</text><text x="1243.8" y="708.3" font-family="Liberation Sans" font-size="7.8" fill="#2a2a2a" stroke="#2a2a2a" stroke-width="0.22">Marriage</text><text x="1243.8" y="727.6" font-family="Liberation Sans" font-size="7.8" fill="#2a2a2a" stroke="#2a2a2a" stroke-width="0.22">Love Affair</text><line x1="1311.2" y1="686.8" x2="1321" y2="686.8" stroke="#1e1e1e" stroke-width="1.35"/><line x1="1332.7" y1="687.0999999999999" x2="1342.5" y2="687.0999999999999" stroke="#1e1e1e" stroke-width="1.35"/><line x1="1311.2" y1="705.8" x2="1321" y2="705.8" stroke="#1e1e1e" stroke-width="1.35"/><line x1="1332.7" y1="706.0999999999999" x2="1342.5" y2="706.0999999999999" stroke="#1e1e1e" stroke-width="1.35"/><line x1="1311.2" y1="724.6" x2="1321" y2="724.6" stroke="#1e1e1e" stroke-width="1.35"/><line x1="1332.7" y1="724.9" x2="1342.5" y2="724.9" stroke="#1e1e1e" stroke-width="1.35"/><path d="M1324 690.5 L1326.3 683.5 M1327.6 690.5 L1329.9 683.5" stroke="#1a1a1a" stroke-width="0.75"/><path d="M1326.2 702.3 L1328.6 709" stroke="#1a1a1a" stroke-width="0.75"/><text transform="translate(1326.5,728.3) scale(0.62,1)" text-anchor="middle" font-family="Liberation Sans" font-size="9.5" fill="#1a1a1a" stroke="#1a1a1a" stroke-width="0.3">X</text><text x="1357.8" y="688.5" font-family="Liberation Sans" font-size="7.8" fill="#2a2a2a" stroke="#2a2a2a" stroke-width="0.22">Divorce</text><text x="1357.8" y="708.3" font-family="Liberation Sans" font-size="7.8" fill="#2a2a2a" stroke="#2a2a2a" stroke-width="0.22">Separation</text><text x="1357.8" y="727.6" font-family="Liberation Sans" font-size="7.8" fill="#2a2a2a" stroke="#2a2a2a" stroke-width="0.22">Widowed</text></svg><!--/GENO-->

<!--OVER-->
<div class="a" style="left:1492px;top:204px;width:39px;height:265px;background:#fff;border-radius:5px;box-shadow:0 0 4px rgba(0,0,0,.18);z-index:6">
  <div class="a" style="left:12px;top:15px;width:0;height:0;border-left:7.5px solid transparent;border-right:7.5px solid transparent;border-bottom:8px solid #dcdcdc"></div>
  <div class="a" style="left:5.5px;top:35.5px;width:29.5px;height:23px;border:1px solid #cfcfcf;font-size:16px;color:#777;text-align:center;line-height:21px">1</div>
  <div class="a" style="left:0;top:62px;width:39px;font-size:12.5px;color:#777;text-align:center;line-height:14px">of 1</div>
  <div class="a" style="left:12px;top:90px;width:0;height:0;border-left:7.5px solid transparent;border-right:7.5px solid transparent;border-top:9px solid #dcdcdc"></div>
  <div class="a" style="left:4.5px;top:116px;width:30px;height:1px;background:#ddd"></div>
  <svg class="a" style="left:12.5px;top:129.5px" width="15" height="16" viewBox="0 0 15 16"><rect x="0" y="0" width="9.5" height="10.5" rx="1" fill="#5a5a5a"/><rect x="4" y="4" width="10" height="11" rx="1" fill="#5a5a5a" stroke="#fff" stroke-width="0.9"/></svg>
  <svg class="a" style="left:12px;top:163px" width="15" height="15" viewBox="0 0 15 15"><path d="M7.5 0 V15 M0 7.5 H15" stroke="#555" stroke-width="2"/></svg>
  <svg class="a" style="left:13.5px;top:193.5px" width="13" height="17" viewBox="0 0 13 17"><path d="M0.5 2.6 H12.5 M4.5 2.3 V0.8 H8.5 V2.3" fill="none" stroke="#dcdcdc" stroke-width="1.5"/><rect x="1.5" y="4.2" width="10" height="12.3" rx="1.4" fill="#dcdcdc"/><path d="M5 6.5 V14 M8 6.5 V14" stroke="#fff" stroke-width="1.2"/></svg>
  <div class="a" style="left:4.5px;top:224px;width:30px;height:1px;background:#ddd"></div>
  <svg class="a" style="left:12.5px;top:239px" width="15" height="15" viewBox="0 0 15 15"><rect x="0" y="0" width="6.6" height="6.6" rx="1.8" fill="#555"/><rect x="8" y="0" width="6.6" height="6.6" rx="1.8" fill="#555"/><rect x="0" y="8" width="6.6" height="6.6" rx="1.8" fill="#555"/><rect x="8" y="8" width="6.6" height="6.6" rx="1.8" fill="#555"/></svg>
</div>
<div class="a" style="left:1303px;top:755px;width:124.5px;height:34.5px;background:#fff;border-radius:5px;box-shadow:0 0 3px rgba(0,0,0,.15);z-index:6">
  <div class="a" style="left:34px;top:0;width:1px;height:34.5px;background:#e6e6e6"></div>
  <div class="a" style="left:90px;top:0;width:1px;height:34.5px;background:#e6e6e6"></div>
  <div class="a" style="left:9.5px;top:16.8px;width:14px;height:1.6px;background:#333"></div>
  <div class="a" style="left:35px;top:-1px;width:55px;font-size:15.5px;line-height:35px;text-align:center;color:#1a1a1a">56%</div>
  <svg class="a" style="left:101px;top:10px" width="15" height="15" viewBox="0 0 15 15"><path d="M7.5 0 V15 M0 7.5 H15" stroke="#333" stroke-width="1.6"/></svg>
</div>
<div class="a" style="left:1362.5px;top:687.5px;width:42px;height:42px;border-radius:50%;background:rgba(255,255,255,.72);box-shadow:0 2px 10px rgba(0,0,0,.10);z-index:7">
  <svg class="a" style="left:15.5px;top:15.5px" width="12" height="12" viewBox="0 0 12 12"><path d="M0.5 0.5 L11.5 11.5 M11.5 0.5 L0.5 11.5" stroke="#666" stroke-width="1.2"/></svg>
</div>
<div class="a" style="left:1414px;top:683px;width:104px;height:47px;border-radius:24px;background:#fff;box-shadow:0 2px 12px rgba(0,0,0,.10);z-index:7;font-size:15.2px;color:#1e1e1e;line-height:47px;text-align:center">Need help?</div>
<div class="a" style="left:1449px;top:739px;width:69px;height:69px;border-radius:50%;background:#172a5e;box-shadow:0 3px 12px rgba(0,0,0,.18);z-index:7">
  <div class="a" style="left:17px;top:24px;width:35px;height:18.5px;border-radius:9.5px;background:#fff"></div>
  <svg class="a" style="left:37.5px;top:44.5px" width="9" height="9" viewBox="0 0 9 9"><path d="M0.5 0 H8.3 V7.5Z" fill="#fff"/></svg>
</div>
<!--/OVER-->
</body></html>
